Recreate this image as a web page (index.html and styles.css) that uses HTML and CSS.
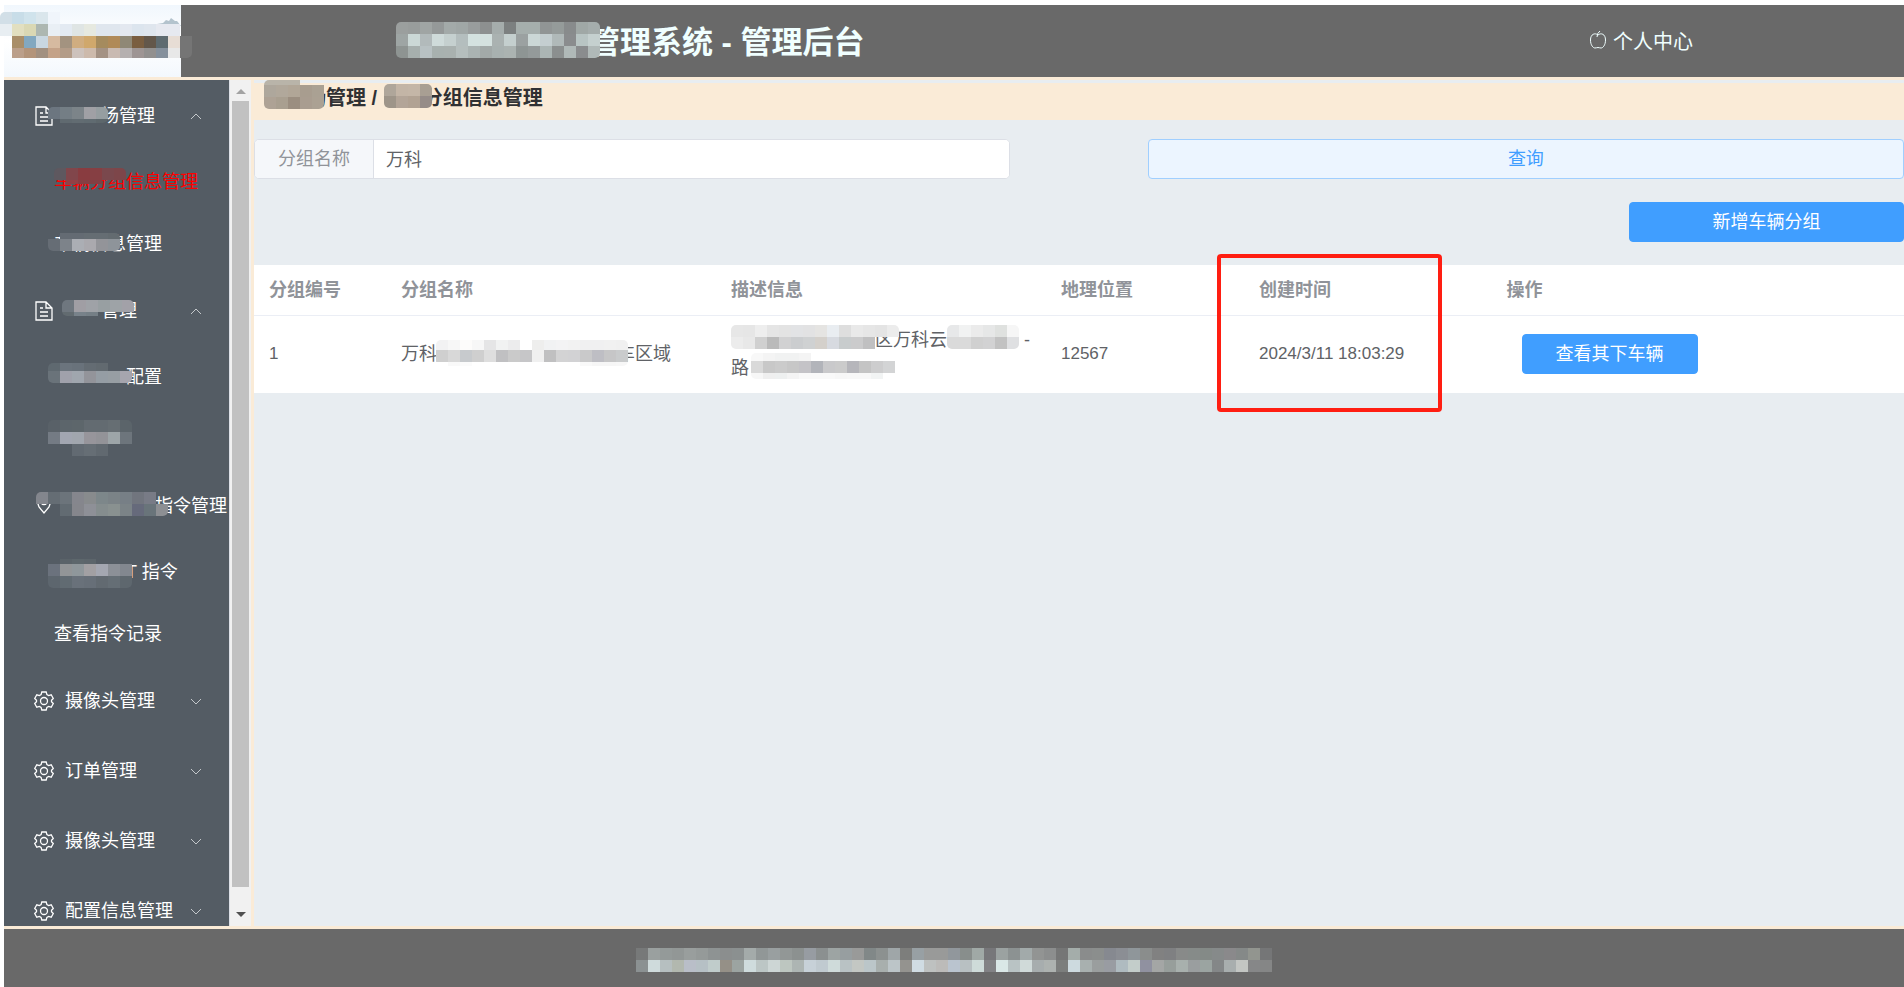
FILE: index.html
```html
<!DOCTYPE html>
<html lang="zh-CN">
<head>
	<meta charset="UTF-8">
	<title>管理后台</title>
	<link rel="stylesheet" href="styles.css">
	<script src="mask.js"></script>
</head>
<body>
	<svg class="defs">
		<symbol id="doc" viewBox="0 0 18 20">
			<path d="M1 1h10l6 6v12H1zM11 1v6h6M5 7h3M5 11h8M5 15h8"/>
		</symbol>
		<symbol id="gear" viewBox="0 0 20 20">
			<path d="M7.8 1h4.4l.7 2.6 1.7 1 2.6-.8 2.1 3.7-1.8 1.8v1.4l1.8 1.8-2.1 3.7-2.6-.8-1.7 1-.7 2.6H7.8l-.7-2.6-1.7-1-2.6.8-2.1-3.7 1.8-1.8V9.3L.7 7.5l2.1-3.7 2.6.8 1.7-1z"/>
			<circle cx="10" cy="10" r="3.5"/>
		</symbol>
		<symbol id="up" viewBox="0 0 12 7"><path d="M1 6l5-5 5 5"/></symbol>
		<symbol id="down" viewBox="0 0 12 7"><path d="M1 1l5 5 5-5"/></symbol>
	</svg>
	<header class="header">
		<a class="logo" href="#" aria-label="首页">
			<svg class="hill" viewBox="0 0 24 8"><path d="M0 6l6-1 3-3 3 1 2-3 4 3 2 0 4 5H6z"/></svg>
			<svg class="mask mask-logo" data-rows="12 12 12 10" data-cells="d2dfe7 c8dde8 d0e3ec dae6ec f0f5fb|e8eef2 e2dfc0 dad8b4 adb7b1 e9eff5 e3eaf2 dfe5e4 e6e9e0 dfe6ee dfe6ee e3e8f0 dce5ee dfe6ee e6e9f0 e6e9f0|- a98e69 82a8c0 c9d7e1 d6baa0 a39380 d0ad80 d0a86c a58b5e b08a58 8f8876 7a5e40 63574a 5e6b70 e7ddd5 757575|- bb9f8a b3947a a29080 c4a288 b39c88 cdc2bc cdbaac a49284 c9bab2 b5b0b0 9e9594 92908f 85909c e8e8e8 757575"></svg>
		</a>
		<h1 class="title">&emsp;&emsp;&emsp;&emsp;&emsp;&emsp;管理系统 - 管理后台
			<svg class="mask mask-title" data-rows="12 12 12" data-cells="9b9f9e 999d9c a0a5a4 959999 a3aaa9 a0a7a6 999d9d 8d9090 a5adac 7c8080 a5aeac a5aeac 919595 959b9a 888b8c a0a8a6 a5adac|9ea5a4 cbd8d6 b2babb cfdbda c5d0cf b4bebe d4e2e0 d4e1df aab2b1 c4cfce 9ba1a1 cbd7d6 c4ced0 b0b9b9 8a8c8e b8c4c3 c5d0cf|8e9492 a6afad b8c1c3 a8b1af a9b1af b5bebd aab3b2 a2a9a8 a8b1b0 abb3b1 8e9594 949a9a abb5b4 8b8f8f b0b9b8 8a8c8e b0b9b8"></svg>
		</h1>
		<a class="user" href="#">
			<svg class="apple" viewBox="0 0 18 20"><path d="M9 5C6 2.500 1.500 4 1.500 10c0 5 2.500 8 4.500 8 1 0 2-.5 3-.5s2 .5 3 .5c2 0 4.500-3 4.500-8 0-6-4.500-7.500-7.500-5zM8 7q0-4 3-6"/></svg>
			个人中心
		</a>
	</header>
	<div class="container">
		<nav class="aside">
			<div class="menu">
				<button class="submenu"><svg class="icon"><use href="#doc"/></svg><span>&emsp;&emsp;场管理</span><svg class="arrow"><use href="#up"/></svg>
					<svg class="mask mask-m1" data-rows="12 4" data-cells="6c7680 747e85 7c8489 a0a0a5 969ea1|- 606a70 626c72 606b71 5d676c"></svg>
				</button>
				<ul class="items">
					<li><a class="active" href="#">车辆分组信息管理
						<svg class="mask mask-i1" data-rows="12 4" data-cells="5e585f 81464b 893c40 863f43 7a484d 7d464a|- 924045 863f43 823f43"></svg></a></li>
					<li><a href="#">车辆信息管理
						<svg class="mask mask-i2" data-rows="6 12" data-cells="- 646b73 646b73 656d73 656d73 636b70|666d75 7d838a abaeb4 aaa9ae 939499 8e949a"></svg></a></li>
				</ul>
				<button class="submenu"><svg class="icon"><use href="#doc"/></svg><span>&emsp;&emsp;管理</span><svg class="arrow"><use href="#up"/></svg>
					<svg class="mask mask-m2" data-rows="12 4" data-cells="6f777f a09ea4 9fa2a7 989fa2 9ea3a7 a2a1a8|626b70 78828a 757f86"></svg>
				</button>
				<ul class="items">
					<li><a href="#">&emsp;&emsp;&emsp;&emsp;配置
						<svg class="mask mask-i3" data-rows="8 12" data-cells="5f6970 6b747d 69727b 646c73 626a70 -|6a737a a0a1ab a0a6ae 93949a 959da4 979ea3 a6a5ae"></svg></a></li>
					<li><a href="#" aria-label="菜单">&emsp;
						<svg class="mask mask-i4" data-rows="12 12 12" data-cells="596168 5c656b 5d666b 636b71 636b71 666e73 5b646a|747b84 a2a6b1 a1a6ae 97959b 939398 9da5a8 6d757c|- - 626a72 666e75 616970"></svg></a></li>
				</ul>
				<button class="submenu"><svg class="icon" viewBox="0 0 18 20"><path d="M2 5l2 6 5 6 5-6 2-6M5 6q4 5 8 0"/></svg><span class="long">指令管理</span>
					<svg class="mask mask-m3" data-rows="12 12" data-cells="83868d 656d74 6c747b 85868d 888b8d 7d878a 7b8387 777f86 71757e 787b86|- - 626b72 85868c 8e9097 858d8e 899190 7b8387 666a7b 69747a 8d8f93"></svg>
				</button>
				<ul class="items">
					<li><a href="#">&emsp;&emsp;&emsp;&emsp;T 指令
						<svg class="mask mask-i5" data-rows="5 12 12" data-cells="- 5a6369 5d676c 5c656b|6b727d 929597 8f979b a2a0a3 a4a7b1 8c9097 82878f|5d666e 616b72 69717a 676f78 626a71 656e75 5e676e"></svg></a></li>
					<li><a href="#">查看指令记录</a></li>
				</ul>
				<button class="submenu"><svg class="icon"><use href="#gear"/></svg><span>摄像头管理</span><svg class="arrow"><use href="#down"/></svg></button>
				<button class="submenu"><svg class="icon"><use href="#gear"/></svg><span>订单管理</span><svg class="arrow"><use href="#down"/></svg></button>
				<button class="submenu"><svg class="icon"><use href="#gear"/></svg><span>摄像头管理</span><svg class="arrow"><use href="#down"/></svg></button>
				<button class="submenu"><svg class="icon"><use href="#gear"/></svg><span>配置信息管理</span><svg class="arrow"><use href="#down"/></svg></button>
			</div>
			<div class="scroll">
				<i class="scroll-up"></i>
				<div class="scroll-thumb"></div>
				<i class="scroll-down"></i>
			</div>
		</nav>
		<main class="main">
			<h2 class="crumb">&emsp;&emsp;场管理 / &emsp;&emsp;分组信息管理
				<svg class="mask mask-c1" data-rows="5 12 12" data-cells="b9b4a9 b9b4a9 b9b4a9|aea79c b1a89b b1a697 a89d8f aaa193|aea295 a99f90 9b8e80 a99d90 aba193"></svg>
				<svg class="mask mask-c2" data-rows="12 12" data-cells="afa69a c3b5a6 c4b6a7 a89f93|9e9589 b3a598 b1a293 958c88"></svg>
			</h2>
			<form class="search">
				<div class="group">
					<label for="name">分组名称</label>
					<input id="name" type="text" value="万科">
				</div>
				<button class="btn btn-query" type="button">查询</button>
			</form>
			<div class="tools"><button class="btn btn-add">新增车辆分组</button></div>
			<div class="list">
				<table>
					<colgroup><col class="c8"><col class="c20"><col class="c20"><col class="c12"><col class="c15"><col class="c25"></colgroup>
					<thead>
						<tr><th>分组编号</th><th>分组名称</th><th>描述信息</th><th>地理位置</th><th>创建时间</th><th>操作</th></tr>
					</thead>
					<tbody>
						<tr>
							<td class="num">1</td>
							<td><div class="cell">万科&emsp;&emsp;&emsp;&emsp;&emsp;&emsp;&emsp;&emsp;&emsp;&emsp;车区域
								<svg class="mask mask-t1" data-rows="10 12 4" data-cells="f2f2f3 f7f7f7 fdfcfb f7f7f7 e5e5e6 f1f2f2 ececed - eeeeed f1f2f3 f3f3f4 f2f2f2 f0f0f1 f0f0f1 f1f1f1 f0f0f0|cfcfcf d8d8d8 c7cacd cfcfcf dedede c0c0c2 cacaca c6c6c8 f0f0f0 c0c0c1 d3d3d4 d2d2d4 c9c9ca bebec4 c6c6c7 c9cbcc|- f9f9f9 fbfbfb - - - - - - - - - f9f9f9 f6f6f6 f6f6f6 f7f7f7"></svg></div></td>
							<td><div class="cell">&emsp;&emsp;&emsp;&emsp;&emsp;&emsp;&emsp;&emsp;区万科云&emsp;&emsp;&emsp;&emsp;&nbsp;-<br>路
								<svg class="mask mask-t2" data-rows="12 12" data-cells="e7e7e7 e6e6e6 eeeeee e5e5e5 e3e3e3 e2e3e5 e2e2e3 e5e4e2 e9edf1 dedede e9e9e9 e6e6e6 e4e4e4 ececec|ececec e8e8e8 d0d0d0 bababa d1d1d2 cbcdcf cfd1d2 d4d0cb d7dae0 c8cccd cbcbcc c0c0c1"></svg>
								<svg class="mask mask-t3" data-rows="12 12" data-cells="e7e8e9 f1f2f2 ebebeb e6e7e7 dfe1df f6f6f6|dadada dadada d0d0d0 d2d2d3 c2c2c2 dfe0e2"></svg>
								<svg class="mask mask-t4" data-rows="8 12 6" data-cells="f8f8f8 f4f4f4 f1f2f2 f1f2f2 f4f4f4|d9d9d9 c8c8c8 cbcbcb c7c7c7 c4c3c7 b2b4ba c9c9cb cbcbcb b6b6bb c4c4c4 cdcdce d3d4d5|f7f7f7 efefef eef0f0 f4f4f4 f9f9f9 f9f9f9 f9f9f9 f7f7f7 f8f8f8 f8f8f8 f2f4f4"></svg></div></td>
							<td class="num">12567</td>
							<td class="num">2024/3/11 18:03:29</td>
							<td><button class="btn btn-view">查看其下车辆</button></td>
						</tr>
					</tbody>
				</table>
				<div class="mark"></div>
			</div>
		</main>
	</div>
	<footer class="footer">
		<svg class="footer-mask" data-rows="12 12" data-cells="777979 9aa09f 949a99 929796 999e9d 959a99 8e9393 8b8e8e 8b9090 a4abaa 919797 999fa0 929796 8c9190 979ca2 8b9090 9da4a3 979ea0 999a99 818888 8c9190 9fa6a8 7d7e7c 98a0a4 999a99 999a99 91979c 888e8c a0a9a6 77777a 9ba2a1 8c9292 a2aaaa 929493 8c8e8e 757676 a4adaa 8a8c8c 8b8e8d 868990 8b8e94 8f969a 8a8d8c 818181 7f8082 888a89 868b89 848a87 868a8a 8a898b 858988 92958f 757677|8b9192 cfdbdc b6bfc0 b2b8af b9bec8 b6c0c5 c0cccb 959087 9ca4a1 cfdcdd bcc6c5 cdd6d5 bdc6c0 adb5b3 c7d1d8 c0cad0 cfdbda b9c2c4 c3c7c3 bbc6c9 a8afad bcc5c8 94938f d0dce3 bec1c0 bcbbb9 bac4cf b8c0c2 cedbd9 828285 dae8e7 b9c3c4 d0dad9 a7adae adb2b0 7c7e7d cddadf a8b0af 9a9e9e 999ca2 afbbc0 c3cdca 9091a0 a4a6a5 979e9b a8b0ad 9a9e9f 9ba4a1 848788 a8aeae c3c6c3 868788 858686"></svg>
	</footer>
</body>
</html>
```
FILE: styles.css
```css
*{margin:0;padding:0;box-sizing:border-box;}
body{min-height:100vh;padding:5px 0 0 4px;display:flex;flex-direction:column;font:18px/28px "Liberation Sans","Noto Sans CJK SC",sans-serif;color:#606266;background:#fff;}
ul{list-style:none;}
a{color:inherit;text-decoration:none;}
button,input{font:inherit;}
svg{fill:none;stroke:currentColor;flex:none;}
.defs{position:absolute;width:0;height:0;}
.mask{position:absolute;stroke:none;border-radius:5px;}

.header{height:72px;display:flex;align-items:center;background:#696969;color:azure;}
.logo{width:177px;height:72px;position:relative;background:linear-gradient(#f1f7fd,#fff 50%,#f3f8fd);}
.hill{position:absolute;right:0;top:13px;width:24px;height:8px;fill:#b3c3cd;stroke:none;}
.mask-logo{left:-4px;top:7px;}
.title{position:relative;margin-left:222px;padding-top:4px;font-size:31px;line-height:40px;white-space:nowrap;}
.mask-title{left:-7px;top:3px;}
.user{margin-left:auto;margin-right:211px;padding-top:2px;display:flex;align-items:center;gap:6px;font-size:20px;}
.apple{width:18px;height:20px;margin-bottom:4px;}

.container{flex:1;display:flex;min-height:0;border-top:3px solid #faebd7;border-bottom:3px solid #faebd7;}
.aside{width:250px;height:846px;display:flex;border-right:3px solid #faebd7;background:#f1f1f1;}
.menu{flex:none;width:225px;padding-top:1px;overflow:hidden;background:#545c64;color:#fff;}
.submenu{position:relative;width:100%;height:70px;padding:0 27px 0 30px;display:flex;align-items:center;gap:11px;border:0;background:none;color:#fff;white-space:nowrap;text-align:left;}
.icon{width:20px;height:20px;stroke-width:1.3;}
.arrow{width:12px;height:7px;margin-left:auto;color:#c4c8cb;}
.long{margin-left:90px;}
.items{padding-bottom:1px;}
.items a{position:relative;display:block;height:62px;padding-left:50px;line-height:62px;white-space:nowrap;}
.items .active{color:red;}
.mask-m1{left:44px;top:26px;}
.mask-m2{left:58px;top:24px;}
.mask-m3{left:32px;top:21px;}
.mask-i1{left:50px;top:17px;}
.mask-i2{left:44px;top:20px;}
.mask-i3{left:44px;top:17px;}
.mask-i4{left:44px;top:12px;}
.mask-i5{left:44px;top:18px;}

.scroll{flex:1;display:flex;flex-direction:column;align-items:center;padding:9px 2px;gap:7px;border-left:1px solid #dcdfe6;}
.scroll i{border:5px solid transparent;}
.scroll .scroll-up{border-top:0;border-bottom-color:#a3a3a3;}
.scroll .scroll-down{margin-top:18px;border-bottom:0;border-top-color:#505050;}
.scroll-thumb{flex:1;width:17px;background:#c1c1c1;}

.main{flex:1;min-width:0;padding-top:3px;background:#e8edf1;}
.crumb{position:relative;height:37px;padding-left:12px;font-size:20px;line-height:30px;color:#303133;background:#faebd7;white-space:nowrap;}
.mask-c1{left:10px;top:-3px;}
.mask-c2{left:130px;top:1px;}
.search{display:flex;justify-content:space-between;padding-top:19px;}
.group{width:45.8333%;display:flex;height:40px;border:1px solid #dcdfe6;border-radius:5px;overflow:hidden;background:#fff;}
.group label{padding:0 23px;line-height:38px;color:#909399;background:#f5f7fa;border-right:1px solid #dcdfe6;}
.group input{flex:1;min-width:0;padding:2px 12px 0;border:0;color:#606266;outline:none;}
.btn{height:40px;line-height:36px;border:1px solid #409eff;border-radius:4px;background:#409eff;color:#fff;}
.btn-query{width:45.8333%;color:#409eff;background:#ecf5ff;border-color:#a0cfff;}
.tools{display:flex;justify-content:flex-end;padding:23px 0;}
.btn-add{width:16.6667%;}
.list{position:relative;}
table{width:100%;table-layout:fixed;border-collapse:collapse;background:#fff;}
.c8{width:8%;}
.c12{width:12%;}
.c15{width:15%;}
.c20{width:20%;}
.c25{width:25%;}
th,td{padding:10px 15px;text-align:left;white-space:nowrap;}
th{height:50px;color:#909399;border-bottom:1px solid #ebeef5;}
td{height:78px;}
.num{font-size:17px;}
.cell{position:relative;}
.mask-t1{left:35px;top:0;}
.mask-t2{left:0;top:-1px;}
.mask-t3{left:216px;top:-1px;}
.mask-t4{left:20px;top:27px;}
.btn-view{margin-left:15px;padding:0 33px;}
.mark{position:absolute;top:-11px;bottom:-19px;left:calc(60% - 27px);width:225px;border:4px solid #ff1e12;border-radius:4px;}

.footer{height:58px;padding-top:19px;background:#696969;}
.footer-mask{display:block;margin:0 auto;stroke:none;}
```
FILE: mask.js
```js
window.onload=function(){
	var aMask=document.querySelectorAll("svg[data-cells]");
	for(var i=0;i<aMask.length;i++)
	{
		drawMask(aMask[i],12);
	}
}
function drawMask(svg,size){
	var heights=svg.getAttribute("data-rows").split(" ");
	var rows=svg.getAttribute("data-cells").split("|");
	var html="",y=0,w=0;
	for(var i=0;i<rows.length;i++)
	{
		var cells=rows[i].split(" ");
		var h=Number(heights[i]);
		w=Math.max(w,cells.length*size);
		for(var j=0;j<cells.length;j++)
		{
			if(cells[j]!="-")
			{
				html+='<rect x="'+j*size+'" y="'+y+'" width="'+size+'" height="'+h+'" fill="#'+cells[j]+'"/>';
			}
		}
		y+=h;
	}
	svg.setAttribute("width",w);
	svg.setAttribute("height",y);
	svg.innerHTML=html;
}
```
